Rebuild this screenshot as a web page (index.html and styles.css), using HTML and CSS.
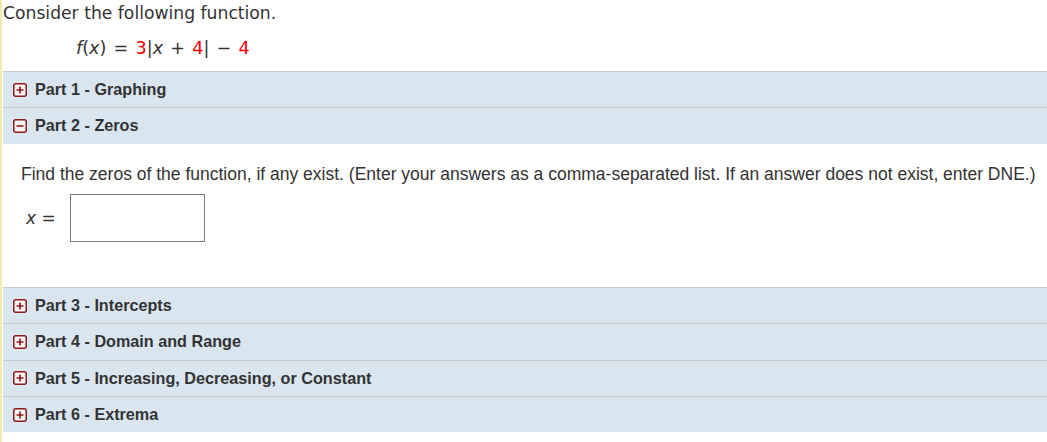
FILE: index.html
```html
<!DOCTYPE html>
<html>
<head>
<meta charset="utf-8">
<link rel="stylesheet" href="styles.css">
</head>
<body>
<div class="page">
  <div class="intro">
    <p class="lead">Consider the following function.</p>
    <p class="formula"><span class="var">f</span>(<span class="var">x</span>) <span class="op">=</span> <span class="num">3</span>|<span class="var">x</span> <span class="op">+</span> <span class="num">4</span>| <span class="op">&minus;</span> <span class="num">4</span></p>
  </div>
  <div class="part"><svg class="toggle" viewBox="0 0 14 14"><rect x="0.75" y="0.75" width="12.5" height="12.5" rx="2"/><path d="M3.5 7h7M7 3.5v7"/></svg><span class="title">Part 1 - Graphing</span></div>
  <div class="part"><svg class="toggle" viewBox="0 0 14 14"><rect x="0.75" y="0.75" width="12.5" height="12.5" rx="2"/><path d="M3.5 7h7"/></svg><span class="title">Part 2 - Zeros</span></div>
  <div class="content">
    <p class="prompt">Find the zeros of the function, if any exist. (Enter your answers as a comma-separated list. If an answer does not exist, enter DNE.)</p>
    <div class="answer"><span class="label"><span class="var">x</span> =</span><span class="box"></span></div>
  </div>
  <div class="part"><svg class="toggle" viewBox="0 0 14 14"><rect x="0.75" y="0.75" width="12.5" height="12.5" rx="2"/><path d="M3.5 7h7M7 3.5v7"/></svg><span class="title">Part 3 - Intercepts</span></div>
  <div class="part"><svg class="toggle" viewBox="0 0 14 14"><rect x="0.75" y="0.75" width="12.5" height="12.5" rx="2"/><path d="M3.5 7h7M7 3.5v7"/></svg><span class="title">Part 4 - Domain and Range</span></div>
  <div class="part"><svg class="toggle" viewBox="0 0 14 14"><rect x="0.75" y="0.75" width="12.5" height="12.5" rx="2"/><path d="M3.5 7h7M7 3.5v7"/></svg><span class="title">Part 5 - Increasing, Decreasing, or Constant</span></div>
  <div class="part"><svg class="toggle" viewBox="0 0 14 14"><rect x="0.75" y="0.75" width="12.5" height="12.5" rx="2"/><path d="M3.5 7h7M7 3.5v7"/></svg><span class="title">Part 6 - Extrema</span></div>
</div>
</body>
</html>
```
FILE: styles.css
```css
html, body { margin: 0; padding: 0; background: #fff; }
.page {
  border-left: 2px solid #f1eca8;
  padding-left: 1px;
  height: 442px;
  box-sizing: border-box;
  color: #333;
}
.intro { height: 71px; font-family: "DejaVu Sans", Verdana, sans-serif; font-size: 17.2px; }
.lead { margin: 0; padding-top: 2px; line-height: 22px; }
.formula { margin: 0; padding-top: 13px; padding-left: 73px; line-height: 22px; font-size: 17.6px; }
.op { margin: 0 1.6px; }
.var { font-style: italic; }
.num { color: #f00000; }
.part {
  height: 35.33px;
  border-top: 1px solid #c8c8c8;
  background: #d9e5ef;
  display: flex;
  align-items: center;
  padding-left: 10px;
  font-family: "Liberation Sans", Arial, sans-serif;
  font-weight: bold;
  font-size: 16.2px;
  color: #333;
}
.toggle {
  width: 14px;
  height: 14px;
  margin-right: 8px;
  flex: none;
}
.toggle rect { fill: #f3f3f3; stroke: #8e1b1b; stroke-width: 1.5; }
.toggle path { stroke: #8e1b1b; stroke-width: 1.6; fill: none; }
.content {
  height: 143.33px;
  font-family: "Liberation Sans", Arial, sans-serif;
  font-size: 17.5px;
}
.prompt { margin: 0; padding: 19px 0 0 18px; line-height: 22px; }
.answer { display: flex; align-items: center; margin-top: 9px; padding-left: 23px; }
.label { font-family: "DejaVu Sans", sans-serif; font-size: 17px; width: 44px; }
.box { width: 133px; height: 46px; border: 1px solid #7a7a7a; background: #fff; }
```
